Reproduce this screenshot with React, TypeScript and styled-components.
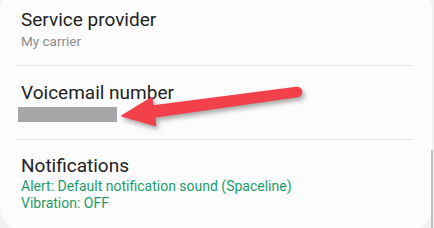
import React from "react";
import styled, { createGlobalStyle } from "styled-components";

const Global = createGlobalStyle`
  html, body { margin: 0; padding: 0; background: #f1f1f1; }
  body { font-family: Roboto, "Noto Sans", Arial, sans-serif; -webkit-font-smoothing: antialiased; }
`;

const Screen = styled.div`
  position: relative;
  width: 434px;
  height: 228px;
  overflow: hidden;
`;

const Card = styled.div`
  margin-top: -12px;
  width: 432px;
  height: 242px;
  background: #fcfcfc;
  border-radius: 22px;
  display: flex;
  flex-direction: column;
  padding: 0 18px 0 16px;
  box-sizing: border-box;
`;

const Row = styled.div<{ $top: number; $bottom: number }>`
  display: flex;
  flex-direction: column;
  align-items: flex-start;
  padding: ${(p) => p.$top}px 0 ${(p) => p.$bottom}px 5px;
`;

const Title = styled.div`
  font-size: 19px;
  line-height: 24px;
  color: #222222;
`;

const Sub = styled.div<{ $green?: boolean }>`
  font-size: ${(p) => (p.$green ? "14px" : "13.5px")};
  line-height: ${(p) => (p.$green ? "16.5px" : "18px")};
  color: ${(p) => (p.$green ? "#1c9c6c" : "#8e8e8e")};
`;

const Divider = styled.div`
  height: 1px;
  background: #e6e6e6;
`;

const Redacted = styled.div`
  width: 99px;
  height: 15px;
  margin: 2px 0 0 -3px;
  background: #a6a6a6;
`;

const Scrollbar = styled.div`
  position: absolute;
  right: 1px;
  top: 150px;
  width: 2px;
  height: 80px;
  background: #bdbdbd;
`;

const Overlay = styled.svg`
  position: absolute;
  left: 0;
  top: 0;
  pointer-events: none;
  filter: drop-shadow(2px 3px 2.5px rgba(0, 0, 0, 0.35));
`;

export default function App() {
  return (
    <Screen>
      <Global />
      <Card>
        <Row $top={20} $bottom={15}>
          <Title>Service provider</Title>
          <Sub>My carrier</Sub>
        </Row>
        <Divider />
        <Row $top={15} $bottom={17}>
          <Title>Voicemail number</Title>
          <Redacted />
        </Row>
        <Divider />
        <Row $top={14} $bottom={10}>
          <Title>Notifications</Title>
          <Sub $green>Alert: Default notification sound (Spaceline)</Sub>
          <Sub $green>Vibration: OFF</Sub>
        </Row>
      </Card>
      <Scrollbar />
      <Overlay width="434" height="228" viewBox="0 0 434 228">
        <path
          d="M 296.4 87.5 L 152.9 106.1 L 151.8 97.7 L 122 116 L 155.6 125.5 L 154.4 117 L 297.6 96.5 A 4.5 4.5 0 0 0 296.4 87.5 Z"
          fill="#f2414b"
          strokeLinejoin="round"
          stroke="#f2414b"
          strokeWidth="1.5"
        />
      </Overlay>
    </Screen>
  );
}
